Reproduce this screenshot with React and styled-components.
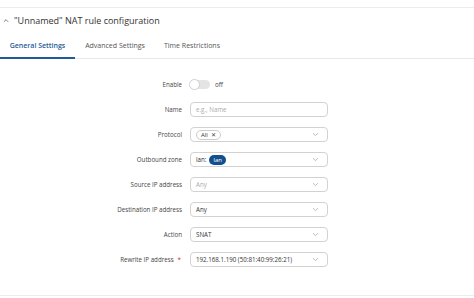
import React from 'react';
import styled, { createGlobalStyle } from 'styled-components';

const Global = createGlobalStyle`
  body {
    margin: 0;
    background: #fff;
    font-family: "Open Sans", "Liberation Sans", sans-serif;
    color: #333;
  }
`;

const Page = styled.div`
  width: 474px;
  height: 298px;
  box-sizing: border-box;
  padding-top: 7px;
  display: flex;
  flex-direction: column;
`;

const Section = styled.div`
  border-top: 1px solid #ececec;
  border-bottom: 1px solid #ececec;
  height: 289px;
  box-sizing: border-box;
  display: flex;
  flex-direction: column;
`;

const Header = styled.div`
  display: flex;
  align-items: center;
  gap: 5px;
  height: 25px;
  padding-left: 3px;
  font-size: 9px;
  color: #333;
`;

const Tabs = styled.div`
  display: flex;
  border-bottom: 1px solid #e8e8e8;
  height: 26px;
  box-sizing: border-box;
`;

const Tab = styled.div`
  width: ${p => p.w}px;
  box-sizing: border-box;
  display: flex;
  align-items: center;
  justify-content: center;
  font-size: 7px;
  color: ${p => (p.active ? '#1d5c96' : '#555')};
  font-weight: ${p => (p.active ? 600 : 400)};
  border-bottom: 2px solid ${p => (p.active ? '#1d5c96' : 'transparent')};
  margin-bottom: -1px;
  padding-top: 1px;
`;

const Form = styled.div`
  display: flex;
  flex-direction: column;
  padding-top: 13px;
`;

const Row = styled.div`
  display: grid;
  grid-template-columns: 182px 138px;
  column-gap: 8px;
  align-items: center;
  height: 25px;
`;

const Label = styled.div`
  text-align: right;
  font-size: 6.2px;
  color: #444;
`;

const Star = styled.span`
  color: #d9303b;
  margin-left: 4px;
  margin-right: 1px;
`;

const Box = styled.div`
  height: 15px;
  box-sizing: border-box;
  border: 1px solid #d2d2d2;
  border-radius: 4px;
  display: flex;
  align-items: center;
  padding: 0 8px 0 5px;
  font-size: 6.2px;
  color: ${p => (p.muted ? '#aaa' : '#333')};
  gap: 3px;
`;

const Value = styled.span`
  flex: 1;
  display: flex;
  align-items: center;
  gap: 3px;
  white-space: nowrap;
`;

const Toggle = styled.div`
  display: flex;
  align-items: center;
  gap: 5px;
  font-size: 6.2px;
  color: #444;
`;

const Track = styled.div`
  width: 20px;
  height: 9px;
  border-radius: 5px;
  background: #e4e4e4;
  position: relative;
`;

const Knob = styled.div`
  position: absolute;
  left: -1px;
  top: -1px;
  width: 11px;
  height: 11px;
  border-radius: 50%;
  background: #fff;
  border: 1px solid #cfcfcf;
  box-sizing: border-box;
`;

const Chip = styled.span`
  display: inline-flex;
  align-items: center;
  gap: 3px;
  height: 10px;
  padding: 0 4px;
  border-radius: 6px;
  box-sizing: border-box;
  border: ${p => (p.filled ? 'none' : '1px solid #ccc')};
  background: ${p => (p.filled ? '#134f8c' : '#fff')};
  color: ${p => (p.filled ? '#fff' : '#333')};
  font-size: 6px;
`;

const Close = styled.span`
  font-size: 6px;
  color: #444;
`;

const Chevron = () => (
  <svg width="7" height="5" viewBox="0 0 7 5">
    <path d="M1 1.2 L3.5 3.6 L6 1.2" fill="none" stroke="#aaa" strokeWidth="0.8" />
  </svg>
);

const Select = ({ children, muted }) => (
  <Box muted={muted}>
    <Value>{children}</Value>
    <Chevron />
  </Box>
);

export default function App() {
  return (
    <>
      <Global />
      <Page>
        <Section>
          <Header>
            <svg width="6" height="5" viewBox="0 0 7 5">
              <path d="M1 4 L3.5 1.5 L6 4" fill="none" stroke="#555" strokeWidth="0.9" />
            </svg>
            <span>"Unnamed" NAT rule configuration</span>
          </Header>
          <Tabs>
            <Tab active w={75}>General Settings</Tab>
            <Tab w={80}>Advanced Settings</Tab>
            <Tab w={74}>Time Restrictions</Tab>
          </Tabs>
          <Form>
            <Row>
              <Label>Enable</Label>
              <Toggle>
                <Track><Knob /></Track>
                off
              </Toggle>
            </Row>
            <Row>
              <Label>Name</Label>
              <Box muted>e.g., Name</Box>
            </Row>
            <Row>
              <Label>Protocol</Label>
              <Select>
                <Chip>All <Close>✕</Close></Chip>
              </Select>
            </Row>
            <Row>
              <Label>Outbound zone</Label>
              <Select>
                lan: <Chip filled>lan</Chip>
              </Select>
            </Row>
            <Row>
              <Label>Source IP address</Label>
              <Select muted>Any</Select>
            </Row>
            <Row>
              <Label>Destination IP address</Label>
              <Select>Any</Select>
            </Row>
            <Row>
              <Label>Action</Label>
              <Select>SNAT</Select>
            </Row>
            <Row>
              <Label>Rewrite IP address<Star>*</Star></Label>
              <Select>192.168.1.190 (50:81:40:99:26:21)</Select>
            </Row>
          </Form>
        </Section>
      </Page>
    </>
  );
}
